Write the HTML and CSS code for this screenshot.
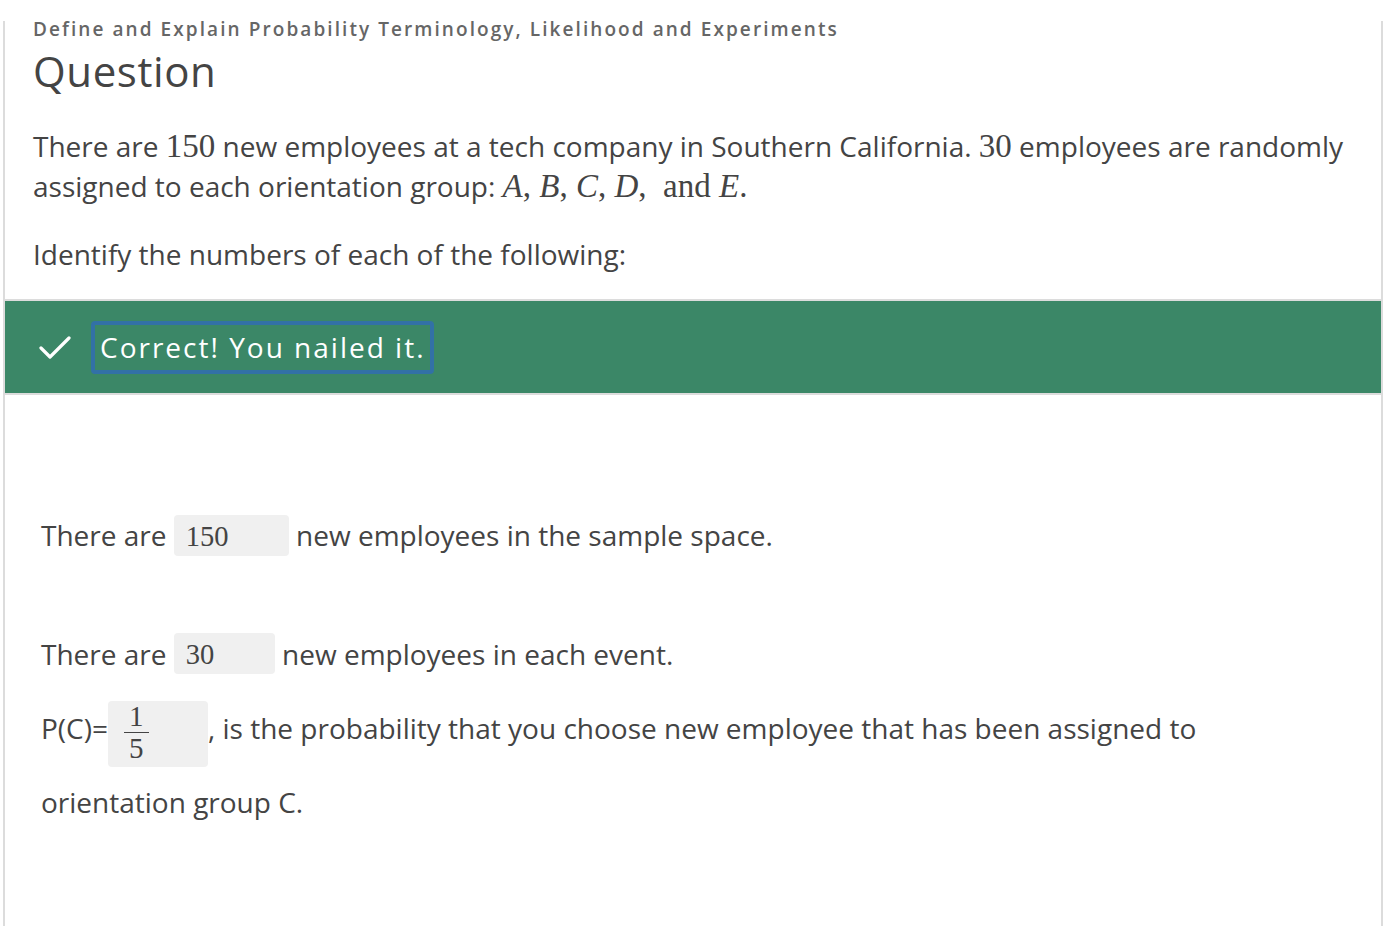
FILE: index.html
```html
<!DOCTYPE html>
<html lang="en">
<head>
<meta charset="utf-8">
<title>Question</title>
<link rel="stylesheet" href="styles.css">
</head>
<body>
<div class="page">
  <div class="head">
    <div class="crumb">Define and Explain Probability Terminology, Likelihood and Experiments</div>
    <h1 class="title">Question</h1>
    <p class="stem">There are <span class="m">150</span> new employees at a tech company in Southern California. <span class="m">30</span> employees are randomly assigned to each orientation group: <span class="m"><i>A</i>, <i>B</i>, <i>C</i>, <i>D</i>, &nbsp;and <i>E</i>.</span></p>
    <p class="stem prompt">Identify the numbers of each of the following:</p>
  </div>
  <div class="banner">
    <svg class="check" width="34" height="26" viewBox="0 0 34 26"><polyline points="3,12 12,21 31,2" fill="none" stroke="#fff" stroke-width="3.2" stroke-linecap="round" stroke-linejoin="round"/></svg>
    <span class="msg">Correct! You nailed it.</span>
  </div>
  <div class="answers">
    <p class="row r1">There are <span class="box w115"><span class="m">150</span></span> new employees in the sample space.</p>
    <p class="row r2">There are <span class="box w101"><span class="m">30</span></span> new employees in each event.</p>
    <p class="row r3">P(C)=<span class="box tall"><span class="frac"><span class="num">1</span><span class="den">5</span></span></span>, is the probability that you choose new employee that has been assigned to</p>
    <p class="row r4">orientation group C.</p>
  </div>
</div>
</body>
</html>
```
FILE: styles.css
```css
html, body {
  margin: 0;
  padding: 0;
  background: #fff;
}
body {
  font-family: "Open Sans", "Liberation Sans", sans-serif;
  color: #444;
}
.page {
  margin: 21px 0 0 3px;
  width: 1376px;
  height: 905px;
  border-left: 2px solid #dcdcdc;
  border-right: 2px solid #dcdcdc;
}
.head {
  padding: 0 0 0 28px;
}
.crumb {
  font-size: 19px;
  font-weight: 600;
  color: #666;
  letter-spacing: 2.07px;
  line-height: 16px;
}
.title {
  margin: 10px 0 0 0;
  font-size: 42px;
  font-weight: 400;
  color: #444;
  line-height: 48px;
  letter-spacing: 0.6px;
}
.stem {
  margin: 31px 0 0 0;
  font-size: 28px;
  line-height: 40px;
  letter-spacing: 0;
  color: #444;
  padding-right: 10px;
}
.stem.prompt {
  margin-top: 28px;
}
.m {
  font-family: "Liberation Serif", "DejaVu Serif", serif;
  font-size: 33px;
  letter-spacing: 0;
}
.m i {
  font-style: italic;
}
.banner {
  margin-top: 25px;
  height: 92px;
  border-top: 2px solid #dcdcdc;
  border-bottom: 2px solid #dcdcdc;
  background: #3b8767;
  display: flex;
  align-items: center;
  padding-left: 33px;
}
.check {
  margin-top: 4px;
}
.msg {
  margin-left: 19px;
  color: #fff;
  font-size: 28px;
  letter-spacing: 2px;
  line-height: 45px;
  padding: 0 4px 0 5px;
  border: 4px solid #3271a6;
  border-radius: 4px;
}
.answers {
  padding: 0 0 0 36px;
}
.row {
  margin: 0;
  font-size: 28px;
  line-height: 40px;
  color: #444;
}
.r1 { margin-top: 120px; }
.r2 { margin-top: 78px; }
.r3 { margin-top: 21px; }
.r4 { margin-top: 15px; }
.box {
  display: inline-block;
  vertical-align: middle;
  background: #f0f0f0;
  border-radius: 4px;
  height: 41px;
  box-sizing: border-box;
  padding-left: 12px;
  line-height: 41px;
  margin-top: -7px;
}
.box .m {
  font-size: 28.5px;
  color: #444;
}
.w115 { width: 115px; }
.w101 { width: 101px; }
.box.tall {
  display: inline-flex;
  align-items: flex-start;
  width: 100px;
  height: 66px;
  padding: 1px 0 0 16px;
  line-height: normal;
  margin-top: 6px;
}
.frac {
  display: flex;
  flex-direction: column;
  align-items: center;
  font-family: "Liberation Serif", "DejaVu Serif", serif;
  font-size: 29px;
  line-height: 29px;
  color: #444;
}
.num {
  border-bottom: 1.5px solid #444;
  padding: 0 5px 1px;
}
.den {
  padding-top: 1px;
}
```
